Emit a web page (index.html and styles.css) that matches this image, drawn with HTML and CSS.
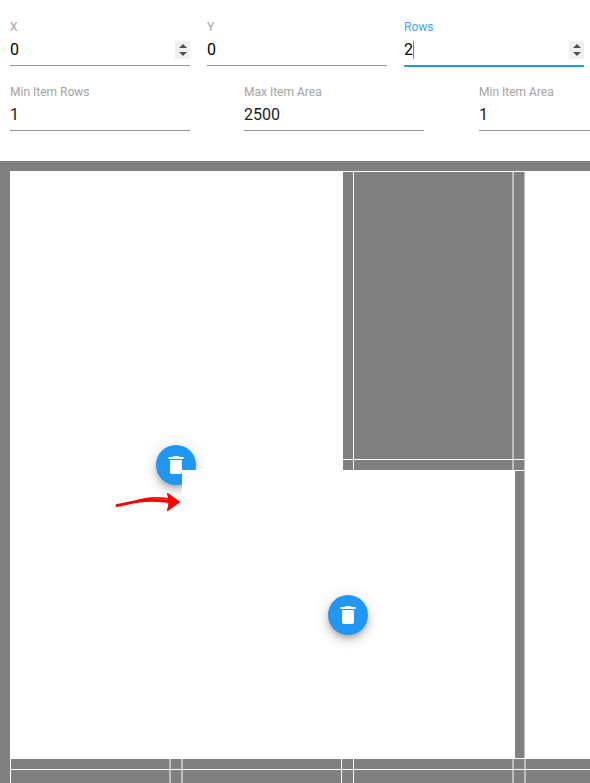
FILE: index.html
```html
<!DOCTYPE html>
<html lang="en">
<head>
    <meta charset="UTF-8">
    <meta name="viewport" content="width=device-width, initial-scale=1.0">
    <title>Grid options</title>
    <link rel="stylesheet" href="styles.css">
</head>
<body>
    <div class="options">
        <div class="options-row row-top">
            <div class="field">
                <label class="field-label">X</label>
                <div class="field-value">0<span class="spinner"><i class="arrow-up"></i><i class="arrow-down"></i></span></div>
            </div>
            <div class="field">
                <label class="field-label">Y</label>
                <div class="field-value">0</div>
            </div>
            <div class="field focused">
                <label class="field-label">Rows</label>
                <div class="field-value">2<span class="caret"></span><span class="spinner"><i class="arrow-up"></i><i class="arrow-down"></i></span></div>
            </div>
        </div>
        <div class="options-row row-bottom">
            <div class="field">
                <label class="field-label">Min Item Rows</label>
                <div class="field-value">1</div>
            </div>
            <div class="field">
                <label class="field-label">Max Item Area</label>
                <div class="field-value">2500</div>
            </div>
            <div class="field">
                <label class="field-label">Min Item Area</label>
                <div class="field-value">1</div>
            </div>
        </div>
    </div>

    <div class="board">
        <div class="grid">
            <div class="item item-a">
                <button class="fab"><svg viewBox="0 0 24 24"><path d="M6 19c0 1.1.9 2 2 2h8c1.1 0 2-.9 2-2V7H6v12zM19.5 4h-4l-1-1h-5l-1 1h-4v2h15V4z"/></svg></button>
            </div>
            <div class="item item-b">
                <button class="fab"><svg viewBox="0 0 24 24"><path d="M6 19c0 1.1.9 2 2 2h8c1.1 0 2-.9 2-2V7H6v12zM19.5 4h-4l-1-1h-5l-1 1h-4v2h15V4z"/></svg></button>
            </div>
            <div class="item item-c"></div>
        </div>

        <!-- hand drawn arrow on top of the screenshot -->
        <svg class="scribble" viewBox="0 0 75 30">
            <path d="M7 17.5 C15 16.5 21 14 30 13 C40 11.5 50 12 64 14" fill="none" stroke="#f00" stroke-width="3" stroke-linecap="round"/>
            <path d="M24 14 C36 9.5 50 9 62 11.5" fill="none" stroke="#f00" stroke-width="1.6"/>
            <path d="M57.5 5.5 L69.5 14 L57.5 22.5 C59.5 17 59.5 11 57.5 5.5 Z" fill="#f00" stroke="#f00" stroke-width="1.2" stroke-linejoin="round"/>
        </svg>
    </div>
</body>
</html>
```
FILE: styles.css
```css
html, body {
    margin: 0;
    height: 100%;
    overflow: hidden;
    background-color: #ffffff;
}
body {
    display: flex;
    flex-direction: column;
    font-family: Roboto, "Liberation Sans", sans-serif;
}

/* top form */
.options {
    height: 161px;
    flex: none;
    padding: 20px 0 0 10px;
    box-sizing: border-box;
    overflow: hidden;
}
.options-row {
    display: flex;
}
.row-top {
    gap: 17px;
    margin-bottom: 19px;
}
.row-bottom {
    gap: 54px;
}
.row-bottom .field:last-child {
    margin-left: 1px;
}
.field {
    flex: none;
    width: 180px;
    height: 45px;
    border-bottom: 1px solid #949494;
}
.field-label {
    display: block;
    height: 14px;
    font-size: 12px;
    line-height: 14px;
    color: #a3a3a3;
}
.field-value {
    display: flex;
    align-items: center;
    height: 18px;
    margin-top: 7px;
    font-size: 16px;
    line-height: 18px;
    color: #212121;
}
.row-top .field-value {
    color: #000000;
}
.focused {
    position: relative;
    border-bottom-color: #2196f3;
}
.focused::after {
    content: "";
    position: absolute;
    left: 0;
    right: 0;
    bottom: -2px;
    height: 2px;
    background-color: #2196f3;
    border-radius: 1px;
}
.focused .field-label {
    color: #42a5f5;
}
.caret {
    width: 1px;
    height: 18px;
    background-color: #2196f3;
}
.spinner {
    display: flex;
    flex-direction: column;
    align-items: center;
    justify-content: center;
    gap: 4px;
    width: 15px;
    height: 18px;
    margin-left: auto;
    background-color: #f0f0f0;
}
.arrow-up, .arrow-down {
    display: block;
    border-left: 4px solid transparent;
    border-right: 4px solid transparent;
}
.arrow-up {
    border-bottom: 4px solid #505050;
}
.arrow-down {
    border-top: 4px solid #505050;
}

/* grid */
.board {
    position: relative;
    flex: 1;
    display: flex;
    padding: 10px 0 0 10px;
    background-color: #808080;
    overflow: hidden;
}
.grid {
    flex: none;
    display: grid;
    grid-template-columns: repeat(4, 161.5px);
    grid-template-rows: repeat(3, 289px);
    gap: 10px;
    width: 100%;
    background-image:
        linear-gradient(to right, #ffffff 1px, transparent 1px, transparent 160px, #ffffff 160px, #ffffff 161px, transparent 161px),
        linear-gradient(to bottom, #ffffff 1px, transparent 1px, transparent 288px, #ffffff 288px, #ffffff 289px, transparent 289px);
    background-size: 171.5px 100%, 100% 299px;
}
.item {
    display: flex;
    align-items: center;
    justify-content: center;
    background-color: #ffffff;
}
.item-a {
    grid-column: 1 / span 2;
    grid-row: 1 / span 2;
    padding-right: 1px;
}
.item-b {
    grid-column: 2 / span 2;
    grid-row: 2;
}
.item-c {
    grid-column: 4;
    grid-row: 1 / span 2;
}
.fab {
    display: flex;
    align-items: center;
    justify-content: center;
    width: 40px;
    height: 40px;
    padding: 0;
    border: 0;
    border-radius: 50%;
    background-color: #2196f3;
    box-shadow: 0 3px 5px -1px rgba(0,0,0,.2), 0 6px 10px 0 rgba(0,0,0,.14), 0 1px 18px 0 rgba(0,0,0,.12);
}
.fab svg {
    width: 24px;
    height: 24px;
    fill: #ffffff;
}
.scribble {
    position: absolute;
    left: 110px;
    top: 327px;
    width: 75px;
    height: 30px;
}
```
